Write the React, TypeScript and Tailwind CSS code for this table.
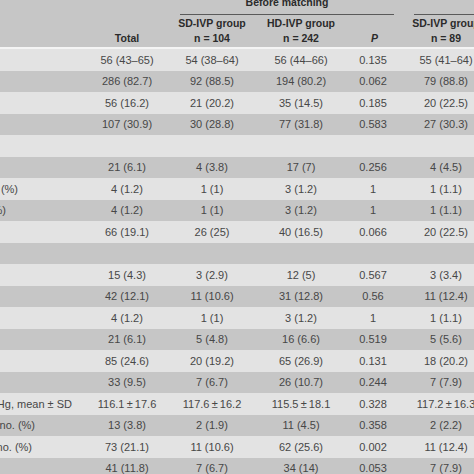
const font = { fontFamily: '"Liberation Sans", Arial, sans-serif' };

type Row = {
  label?: string;
  pad?: string;
  total?: string;
  sd?: string;
  hd?: string;
  p?: string;
  sd2?: string;
};

const rows: Row[] = [
  { label: "Age, yr, median (IQR)", pad: "pr-[95px]", total: "56 (43–65)", sd: "54 (38–64)", hd: "56 (44–66)", p: "0.135", sd2: "55 (41–64)" },
  { label: "Male sex, no. (%)", pad: "pr-[95px]", total: "286 (82.7)", sd: "92 (88.5)", hd: "194 (80.2)", p: "0.062", sd2: "79 (88.8)" },
  { label: "Smoking, no. (%)", pad: "pr-[95px]", total: "56 (16.2)", sd: "21 (20.2)", hd: "35 (14.5)", p: "0.185", sd2: "20 (22.5)" },
  { label: "Hypertension, no. (%)", pad: "pr-[95px]", total: "107 (30.9)", sd: "30 (28.8)", hd: "77 (31.8)", p: "0.583", sd2: "27 (30.3)" },
  {},
  { label: "Renal failure, no. (%)", pad: "pr-[95px]", total: "21 (6.1)", sd: "4 (3.8)", hd: "17 (7)", p: "0.256", sd2: "4 (4.5)" },
  { label: "Chronic liver disease, no. (%)", pad: "pr-[69px]", total: "4 (1.2)", sd: "1 (1)", hd: "3 (1.2)", p: "1", sd2: "1 (1.1)" },
  { label: "Immunosuppression, no. (%)", pad: "pr-[81px]", total: "4 (1.2)", sd: "1 (1)", hd: "3 (1.2)", p: "1", sd2: "1 (1.1)" },
  { label: "Coronary disease, no. (%)", pad: "pr-[95px]", total: "66 (19.1)", sd: "26 (25)", hd: "40 (16.5)", p: "0.066", sd2: "20 (22.5)" },
  {},
  { label: "Stroke, no. (%)", pad: "pr-[95px]", total: "15 (4.3)", sd: "3 (2.9)", hd: "12 (5)", p: "0.567", sd2: "3 (3.4)" },
  { label: "Diabetes, no. (%)", pad: "pr-[95px]", total: "42 (12.1)", sd: "11 (10.6)", hd: "31 (12.8)", p: "0.56", sd2: "11 (12.4)" },
  { label: "Cancer, no. (%)", pad: "pr-[95px]", total: "4 (1.2)", sd: "1 (1)", hd: "3 (1.2)", p: "1", sd2: "1 (1.1)" },
  { label: "COPD, no. (%)", pad: "pr-[95px]", total: "21 (6.1)", sd: "5 (4.8)", hd: "16 (6.6)", p: "0.519", sd2: "5 (5.6)" },
  { label: "Obesity, no. (%)", pad: "pr-[95px]", total: "85 (24.6)", sd: "20 (19.2)", hd: "65 (26.9)", p: "0.131", sd2: "18 (20.2)" },
  { label: "Heart failure, no. (%)", pad: "pr-[95px]", total: "33 (9.5)", sd: "7 (6.7)", hd: "26 (10.7)", p: "0.244", sd2: "7 (7.9)" },
  { label: "Systolic blood pressure, mm Hg, mean ± SD", pad: "pr-[15px]", total: "116.1\u2009±\u200917.6", sd: "117.6\u2009±\u200916.2", hd: "115.5\u2009±\u200918.1", p: "0.328", sd2: "117.2\u2009±\u200916.3" },
  { label: "Prior cardiac arrest, no. (%)", pad: "pr-[52px]", total: "13 (3.8)", sd: "2 (1.9)", hd: "11 (4.5)", p: "0.358", sd2: "2 (2.2)" },
  { label: "Vasopressors, no. (%)", pad: "pr-[55px]", total: "73 (21.1)", sd: "11 (10.6)", hd: "62 (25.6)", p: "0.002", sd2: "11 (12.4)" },
  { label: "Mechanical ventilation, no. (%)", pad: "pr-[95px]", total: "41 (11.8)", sd: "7 (6.7)", hd: "34 (14)", p: "0.053", sd2: "7 (7.9)" },
];

const cols = "grid grid-cols-[87px_80px_90px_88px_56px_90px]";

export default function App() {
  return (
    <div className="w-[474px] h-[474px] overflow-hidden bg-[#e3e3e3]" style={font}>
      {/* header */}
      <div className="h-[47px] bg-[#c6c6c6] text-[10.5px] font-bold text-[#2b2b2b]">
        <div className={`${cols} h-[15px]`}>
          <div className="col-span-2" />
          <div className="col-span-3 ml-[13px] mr-[7px] border-b border-[#5a5a5a] flex justify-center overflow-visible">
            <span className="leading-[11px] -mt-[3px] whitespace-nowrap">Before matching</span>
          </div>
          <div className="ml-[13px] border-b border-[#5a5a5a]" />
        </div>
        <div className={`${cols} pt-[1px] leading-[15px] text-center`}>
          <div />
          <div className="flex flex-col">
            <span>&nbsp;</span>
            <span>Total</span>
          </div>
          <div className="flex flex-col whitespace-nowrap">
            <span>SD-IVP group</span>
            <span>n = 104</span>
          </div>
          <div className="flex flex-col whitespace-nowrap">
            <span>HD-IVP group</span>
            <span>n = 242</span>
          </div>
          <div className="flex flex-col">
            <span>&nbsp;</span>
            <span className="italic pl-[3px]">P</span>
          </div>
          <div className="flex flex-col whitespace-nowrap">
            <span>SD-IVP group</span>
            <span>n = 89</span>
          </div>
        </div>
      </div>
      <div className="h-[2px] bg-[#f4f4f4]" />

      {/* body */}
      <div className="text-[11px] text-[#474747]">
        {rows.map((r, i) => (
          <div
            key={i}
            className={`${cols} h-[21.5px] items-center text-center whitespace-nowrap ${
              i % 2 === 0 ? "bg-[#e3e3e3]" : "bg-[#c6c6c6]"
            }`}
          >
            <div className={`flex justify-end overflow-hidden ${r.pad ?? ""}`}>
              <span>{r.label}</span>
            </div>
            <div>{r.total}</div>
            <div>{r.sd}</div>
            <div>{r.hd}</div>
            <div>{r.p}</div>
            <div>{r.sd2}</div>
          </div>
        ))}
      </div>
    </div>
  );
}
